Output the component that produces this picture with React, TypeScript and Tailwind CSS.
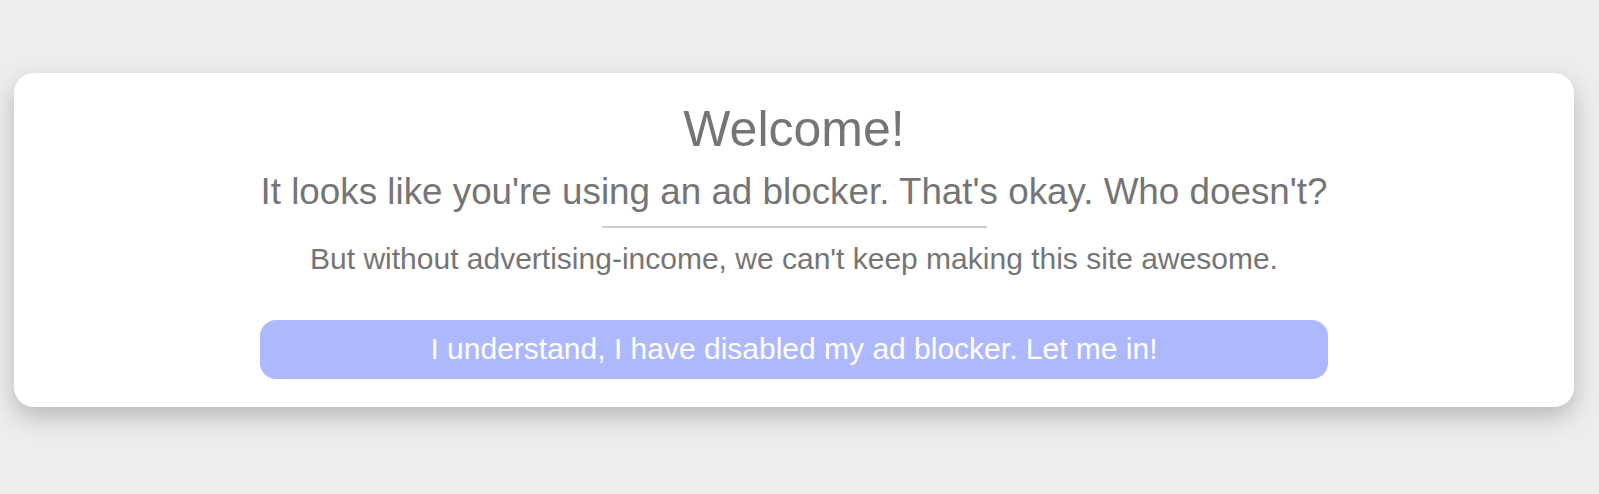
const AdBlockNotice = () => {
  return (
    <div className="w-[1560px] ml-[14px] bg-white rounded-[20px] shadow-[0_10px_25px_rgba(0,0,0,0.22)] pt-[28px] pb-[28px] flex flex-col items-center text-[#757575] font-['Liberation_Sans',Arial,sans-serif]">
      <h1 className="text-[50px] leading-[56px] font-normal">Welcome!</h1>
      <p className="mt-[14px] text-[36.8px] leading-[42px]">
        It looks like you're using an ad blocker. That's okay. Who doesn't?
      </p>
      <div className="mt-[13px] w-[385px] h-[2px] bg-[#cccccc]" />
      <p className="mt-[13px] text-[30px] leading-[35px]">
        But without advertising-income, we can't keep making this site awesome.
      </p>
      <button className="mt-[44px] w-[1068px] h-[59px] pt-[11px] pb-[13px] rounded-[16px] bg-[#aeb8fe] text-white text-[30px] leading-[35px] font-['Liberation_Sans',Arial,sans-serif]">
        I understand, I have disabled my ad blocker. Let me in!
      </button>
    </div>
  );
};

export default function App() {
  return (
    <div className="min-h-screen bg-[#ededed] pt-[73px]">
      <AdBlockNotice />
    </div>
  );
}
